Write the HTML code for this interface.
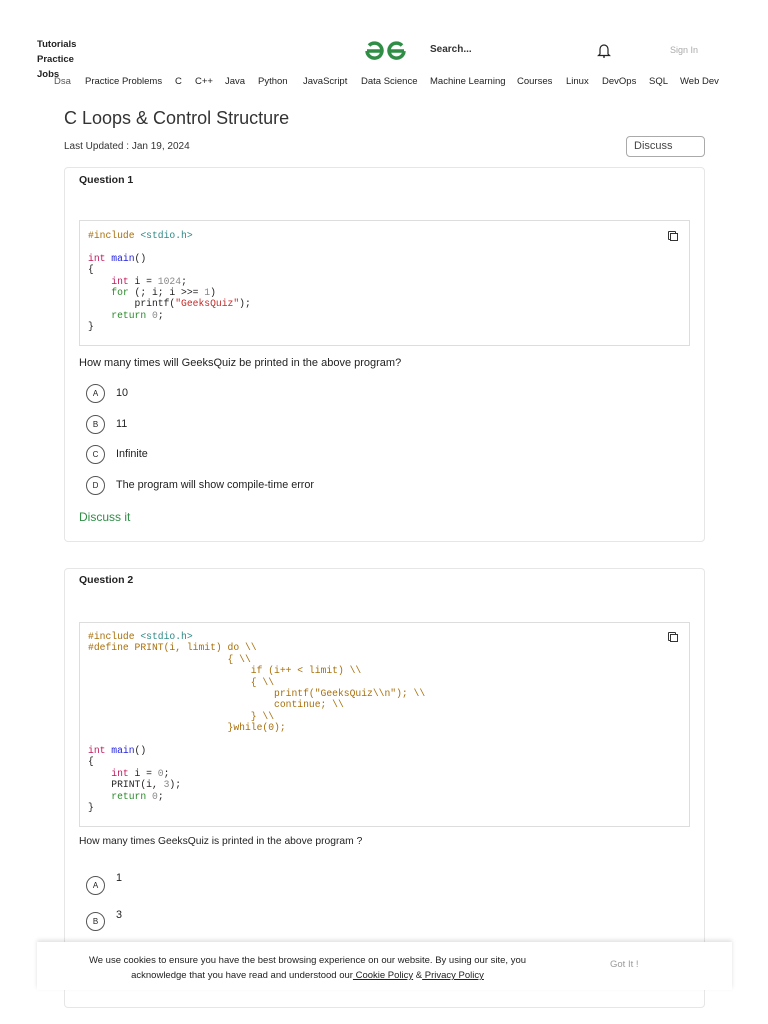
<!DOCTYPE html>
<html><head><meta charset="utf-8"><style>
*{margin:0;padding:0;box-sizing:border-box}
body{width:768px;height:1024px;overflow:hidden;background:#fff;font-family:"Liberation Sans",sans-serif;color:#222;position:relative}
.a{position:absolute;white-space:nowrap}
.nav span{position:absolute;top:76px;font-size:9.5px;color:#222}
.card{position:absolute;left:64px;width:641px;border:1px solid #e6e6e6;border-radius:4px}
.code{position:absolute;left:79px;width:611px;border:1px solid #ddd;background:#fff}
pre{position:absolute;left:88px;font-family:"Liberation Mono",monospace;font-size:9.7px;line-height:11.4px;color:#222}
.k{color:#c2185b}.f{color:#2020e0}.g{color:#2a8a2a}.s{color:#c62828}.p{color:#a86f0a}.t{color:#2e8a86}.n{color:#888}.d{color:#222}
.opt{position:absolute;left:86px;width:19px;height:19px;border:1px solid #555;border-radius:50%;font-size:8px;text-align:center;line-height:17px}
.ot{position:absolute;left:116px;font-size:10.8px}
.cp{position:absolute;left:668px;width:8px;height:9px;border:1.3px solid #333;border-radius:1px}
.cp:after{content:"";position:absolute;left:1px;top:1px;width:6px;height:6px;border:1.3px solid #333;background:#fff}
</style></head><body>
<div class="a" style="left:37px;top:37px;font-size:9.5px;font-weight:bold;line-height:15px">Tutorials<br>Practice<br>Jobs</div>
<svg class="a" style="left:364px;top:41px" width="43" height="20" viewBox="0 0 43 20"><path d="M3 10h15M3 10a7.5 7.5 0 1 0 2-5.5M40 10H25M40 10a7.5 7.5 0 1 1-2-5.5" fill="none" stroke="#2f8d46" stroke-width="3.5"/></svg>
<div class="a" style="left:430px;top:44px;font-size:10px;font-weight:bold;color:#333">Search...</div>
<svg class="a" style="left:597px;top:43px" width="14" height="16" viewBox="0 0 14 16"><path d="M3 11V6a4 4 0 0 1 8 0v5l1.5 1.5h-11z M6 14h2" fill="none" stroke="#222" stroke-width="1.2"/></svg>
<div class="a" style="left:670px;top:45px;font-size:9px;color:#aaa">Sign In</div>
<div class="nav"><span style="left:54px;color:#555">Dsa</span><span style="left:85px">Practice Problems</span><span style="left:175px">C</span><span style="left:195px">C++</span><span style="left:225px">Java</span><span style="left:258px">Python</span><span style="left:303px">JavaScript</span><span style="left:361px">Data Science</span><span style="left:430px">Machine Learning</span><span style="left:517px">Courses</span><span style="left:566px">Linux</span><span style="left:602px">DevOps</span><span style="left:649px">SQL</span><span style="left:680px">Web Dev</span></div>
<div class="a" style="left:64px;top:108px;font-size:18px;color:#333">C Loops &amp; Control Structure</div>
<div class="a" style="left:64px;top:141px;font-size:10px;color:#333">Last Updated : Jan 19, 2024</div>
<div class="a" style="left:626px;top:136px;width:79px;height:21px;border:1px solid #aaa;border-radius:4px;font-size:11px;padding:3px 7px;color:#444">Discuss</div>

<div class="card" style="top:167px;height:375px"></div>
<div class="a" style="left:79px;top:174px;font-size:10.5px;font-weight:bold">Question 1</div>
<div class="code" style="top:220px;height:126px"></div><div class="cp" style="top:231px"></div>
<pre style="top:230px"><span class="p">#include</span> <span class="t">&lt;stdio.h&gt;</span>

<span class="k">int</span> <span class="f">main</span>()
{
    <span class="k">int</span> i = <span class="n">1024</span>;
    <span class="g">for</span> (; i; i &gt;&gt;= <span class="n">1</span>)
        printf(<span class="s">"GeeksQuiz"</span>);
    <span class="g">return</span> <span class="n">0</span>;
}</pre>
<div class="a" style="left:79px;top:357px;font-size:11px">How many times will GeeksQuiz be printed in the above program?</div>
<div class="opt" style="top:384px">A</div><div class="ot" style="top:387px">10</div>
<div class="opt" style="top:415px">B</div><div class="ot" style="top:418px">11</div>
<div class="opt" style="top:445px">C</div><div class="ot" style="top:448px">Infinite</div>
<div class="opt" style="top:476px">D</div><div class="ot" style="top:479px">The program will show compile-time error</div>
<div class="a" style="left:79px;top:510px;font-size:12px;color:#2f8d46">Discuss it</div>

<div class="card" style="top:568px;height:440px"></div>
<div class="a" style="left:79px;top:574px;font-size:10.5px;font-weight:bold">Question 2</div>
<div class="code" style="top:622px;height:205px"></div><div class="cp" style="top:632px"></div>
<pre style="top:631px" class="p"><span class="p">#include</span> <span class="t">&lt;stdio.h&gt;</span>
#define PRINT(i, limit) do \\
                        { \\
                            if (i++ &lt; limit) \\
                            { \\
                                printf("GeeksQuiz\\n"); \\
                                continue; \\
                            } \\
                        }while(0);

<span class="k">int</span> <span class="f">main</span><span class="d">()
{
    </span><span class="k">int</span><span class="d"> i = </span><span class="n">0</span><span class="d">;
    PRINT(i, </span><span class="n">3</span><span class="d">);
    </span><span class="g">return</span> <span class="n">0</span><span class="d">;
}</span></pre>
<div class="a" style="left:79px;top:836px;font-size:10.3px">How many times GeeksQuiz is printed in the above program ?</div>
<div class="opt" style="top:876px">A</div><div class="ot" style="top:872px">1</div>
<div class="opt" style="top:912px">B</div><div class="ot" style="top:909px">3</div>

<div class="a" style="left:37px;top:942px;width:695px;height:48px;background:#fff;box-shadow:0 -2px 4px rgba(0,0,0,.12)"></div>
<div class="a" style="left:70px;top:953px;width:475px;text-align:center;font-size:9.5px;line-height:15px;color:#222;white-space:normal">We use cookies to ensure you have the best browsing experience on our website. By using our site, you acknowledge that you have read and understood our<u> Cookie Policy</u> &amp;<u> Privacy Policy</u></div>
<div class="a" style="left:610px;top:959px;font-size:9.5px;color:#999">Got It !</div>
</body></html>
